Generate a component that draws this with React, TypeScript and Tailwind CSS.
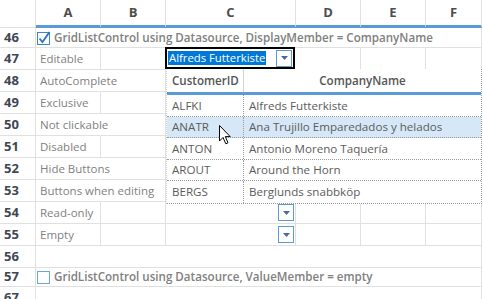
import React from "react";

const rows = [
  { n: 47, label: "Editable", split: true, c: "editor" },
  { n: 48, label: "AutoComplete", split: false, c: "" },
  { n: 49, label: "Exclusive", split: true, c: "" },
  { n: 50, label: "Not clickable", split: false, c: "" },
  { n: 51, label: "Disabled", split: true, c: "" },
  { n: 52, label: "Hide Buttons", split: false, c: "" },
  { n: 53, label: "Buttons when editing", split: false, c: "" },
  { n: 54, label: "Read-only", split: true, c: "button" },
  { n: 55, label: "Empty", split: true, c: "button" },
];

const customers = [
  ["ALFKI", "Alfreds Futterkiste"],
  ["ANATR", "Ana Trujillo Emparedados y helados"],
  ["ANTON", "Antonio Moreno Taquería"],
  ["AROUT", "Around the Horn"],
  ["BERGS", "Berglunds snabbköp"],
];

function DropButton() {
  return (
    <div className="w-[16px] h-[17px] border border-[#5b9bd5] bg-white flex items-center justify-center">
      <svg width="7" height="4" viewBox="0 0 7 4">
        <path d="M0 0 L7 0 L3.5 4 Z" fill="#4a6a9c" />
      </svg>
    </div>
  );
}

function Checkbox({ checked }: { checked: boolean }) {
  return (
    <svg width="14" height="14" viewBox="0 0 14 14" className="shrink-0">
      <rect x="0.5" y="1.5" width="12" height="12" fill="white" stroke={checked ? "#3d86cf" : "#6aa6dc"} />
      {checked && <path d="M2.5 7.5 L5.5 11 L12.5 1" fill="none" stroke="#2b72c0" strokeWidth="1.8" />}
    </svg>
  );
}

function RowHead({ n, h = "h-[22px]" }: { n: number; h?: string }) {
  return (
    <div className={`w-[36px] ${h} shrink-0 border-r border-b border-[#e0e0e0] flex items-center pl-[4px] text-[13px] font-bold text-[#3f4654]`}>
      {n}
    </div>
  );
}

export default function App() {
  return (
    <div
      className="relative w-[483px] h-[299px] overflow-hidden bg-white select-none"
      style={{ fontFamily: '"Open Sans", "Noto Sans", sans-serif' }}
    >
      {/* column headers */}
      <div className="flex h-[28px]">
        <div className="w-[36px] shrink-0 border-r border-b border-[#e0e0e0]" />
        {[
          ["A", "w-[65px]"],
          ["B", "w-[65px]"],
          ["C", "w-[130px]"],
          ["D", "w-[65px]"],
          ["E", "w-[65px]"],
          ["F", "w-[56px]"],
        ].map(([l, w]) => (
          <div
            key={l}
            className={`${w} shrink-0 border-r border-r-[#e0e0e0] border-b-[3px] border-b-[#5b9bd5] flex items-center justify-center text-[13px] font-bold text-[#4d4d4d]`}
          >
            {l}
          </div>
        ))}
      </div>

      {/* row 46 */}
      <div className="flex">
        <RowHead n={46} h="h-[20px]" />
        <div className="w-[446px] h-[20px] border-r border-b border-[#e0e0e0] flex items-center gap-[3px] pl-[1px] text-[11.6px] font-semibold text-[#808080] whitespace-nowrap">
          <Checkbox checked />
          GridListControl using Datasource, DisplayMember = CompanyName
        </div>
      </div>

      {rows.map((r) => (
        <div key={r.n} className="flex">
          <RowHead n={r.n} />
          <div
            className={`w-[65px] h-[22px] shrink-0 border-b border-[#e0e0e0] ${r.split ? "border-r" : "border-r border-r-white"} flex items-center pl-[4px] text-[11.5px] text-[#7f7f7f] whitespace-nowrap overflow-visible relative z-10`}
          >
            {r.label}
          </div>
          <div className="w-[65px] h-[22px] shrink-0 border-r border-b border-[#e0e0e0]" />
          {r.c === "editor" ? (
            <div className="w-[130px] h-[22px] shrink-0 border-2 border-black flex items-center justify-between pl-[1px] pr-[1px] relative -top-[1px] -left-[1px]">
              <span className="bg-[#0078d7] text-white text-[11.3px] leading-[14px] px-[1px]">Alfreds Futterkiste</span>
              <DropButton />
            </div>
          ) : (
            <div className="w-[130px] h-[22px] shrink-0 border-r border-b border-[#e0e0e0] flex items-center justify-end pr-[1px]">
              {r.c === "button" && <DropButton />}
            </div>
          )}
          <div className="w-[65px] h-[22px] shrink-0 border-r border-b border-[#e0e0e0]" />
          <div className="w-[65px] h-[22px] shrink-0 border-r border-b border-[#e0e0e0]" />
          <div className="w-[56px] h-[22px] shrink-0 border-r border-b border-[#e0e0e0]" />
        </div>
      ))}

      {/* row 56 */}
      <div className="flex">
        <RowHead n={56} />
        <div className="w-[446px] h-[22px] border-r border-b border-[#e0e0e0]" />
      </div>

      {/* row 57 */}
      <div className="flex">
        <RowHead n={57} h="h-[19px]" />
        <div className="w-[446px] h-[19px] border-r border-b border-[#e0e0e0] flex items-center gap-[3px] pl-[1px] text-[11.6px] font-semibold text-[#808080] whitespace-nowrap">
          <Checkbox checked={false} />
          GridListControl using Datasource, ValueMember = empty
        </div>
      </div>

      {/* row 67 */}
      <div className="flex">
        <RowHead n={67} />
        <div className="w-[446px] h-[22px] border-r border-b border-[#e0e0e0]" />
      </div>

      {/* dropdown popup */}
      <div className="absolute left-[166px] top-[69px] w-[316px] bg-white border-l border-l-[#d4d4d4] border-r border-r-[#9a9a9a] border-dotted border-b border-b-[#9a9a9a] z-20">
        <div className="flex h-[26px] border-b-[3px] border-b-[#5b9bd5]">
          <div className="w-[77px] shrink-0 border-r border-[#d4d4d4] flex items-center pl-[5px] text-[11.6px] font-semibold text-[#555]">
            CustomerID
          </div>
          <div className="flex-1 flex items-center justify-center text-[11.6px] font-semibold text-[#555]">
            CompanyName
          </div>
        </div>
        {customers.map(([id, name], i) => (
          <div
            key={id}
            className={`flex h-[21.6px] ${i < customers.length - 1 ? "border-b border-dotted border-b-[#9a9a9a]" : ""} ${i === 1 ? "bg-[#d6e8f7]" : ""} text-[11.6px] text-[#5c5c5c]`}
          >
            <div className="w-[77px] shrink-0 border-r border-dotted border-r-[#9a9a9a] flex items-center pl-[5px]">{id}</div>
            <div className="flex-1 flex items-center pl-[5px] whitespace-nowrap">{name}</div>
          </div>
        ))}
      </div>

      {/* mouse cursor */}
      <svg className="absolute left-[219px] top-[125px] z-30" width="13" height="20" viewBox="0 0 13 20">
        <path d="M0.5 0.5 L0.5 16 L4 12.5 L6.8 18.8 L9 17.8 L6.3 11.6 L11.2 11.6 Z" fill="white" stroke="black" strokeWidth="1" strokeLinejoin="round" />
      </svg>
    </div>
  );
}
